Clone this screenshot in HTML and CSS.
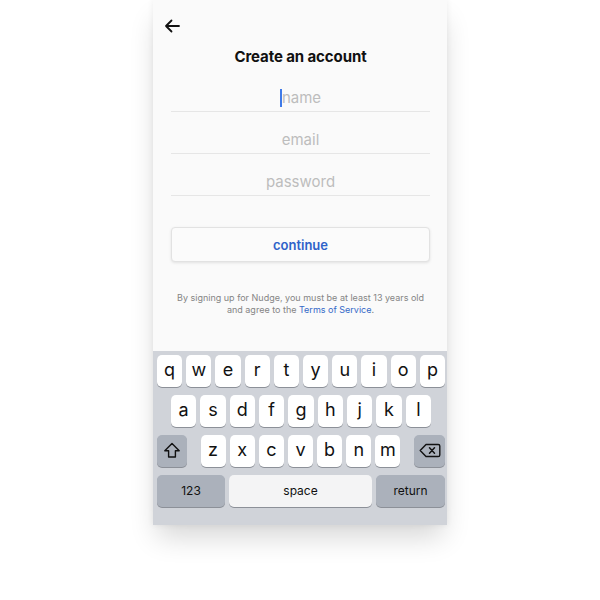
FILE: index.html
```html
<!DOCTYPE html>
<html>
<head>
<meta charset="utf-8">
<link rel="stylesheet" href="styles.css">
</head>
<body>
<div class="stage">
  <div class="phone">
    <div class="content">
      <div class="topbar">
        <svg class="back" width="16" height="14" viewBox="0 0 16 14"><path d="M15 7H2M7.5 1.5L2 7l5.5 5.5" fill="none" stroke="#111" stroke-width="1.8" stroke-linecap="round" stroke-linejoin="round"/></svg>
      </div>
      <h1 class="title">Create an account</h1>
      <div class="field first"><span class="caret"></span>name</div>
      <div class="field">email</div>
      <div class="field">password</div>
      <div class="btn">continue</div>
      <p class="terms">By signing up for Nudge, you must be at least 13 years old<br>and agree to the <span class="link">Terms of Service</span>.</p>
    </div>
    <div class="keyboard">
      <div class="row r1">
        <div class="key">q</div><div class="key">w</div><div class="key">e</div><div class="key">r</div><div class="key">t</div><div class="key">y</div><div class="key">u</div><div class="key">i</div><div class="key">o</div><div class="key">p</div>
      </div>
      <div class="row r2">
        <div class="key">a</div><div class="key">s</div><div class="key">d</div><div class="key">f</div><div class="key">g</div><div class="key">h</div><div class="key">j</div><div class="key">k</div><div class="key">l</div>
      </div>
      <div class="row r3">
        <div class="key fn"><svg width="18" height="17" viewBox="0 0 18 17"><path d="M9 1.5L1.8 8.8H5.6V15H12.4V8.8H16.2Z" fill="none" stroke="#111" stroke-width="1.4" stroke-linejoin="round"/></svg></div>
        <div class="letters">
          <div class="key">z</div><div class="key">x</div><div class="key">c</div><div class="key">v</div><div class="key">b</div><div class="key">n</div><div class="key">m</div>
        </div>
        <div class="key fn"><svg width="22" height="15" viewBox="0 0 22 15"><path d="M7 1.5H19.2a1.6 1.6 0 0 1 1.6 1.6V11.9a1.6 1.6 0 0 1-1.6 1.6H7L1.2 7.5Z" fill="none" stroke="#111" stroke-width="1.4" stroke-linejoin="round"/><path d="M10.5 4.8l5 5.4M15.5 4.8l-5 5.4" stroke="#111" stroke-width="1.5" stroke-linecap="round"/></svg></div>
      </div>
      <div class="row r4">
        <div class="key fn small">123</div>
        <div class="key space small">space</div>
        <div class="key fn small">return</div>
      </div>
    </div>
  </div>
</div>
</body>
</html>
```
FILE: styles.css
```css
html, body {
  margin: 0;
  padding: 0;
  background: #ffffff;
}
body {
  font-family: Inter, "Liberation Sans", Arial, sans-serif;
}
.stage {
  width: 600px;
  height: 600px;
  display: flex;
  justify-content: center;
  align-items: flex-start;
}
.phone {
  width: 294px;
  height: 525px;
  background: #fafafa;
  display: flex;
  flex-direction: column;
  box-shadow: 0 16px 26px -4px rgba(0,0,0,0.16), 0 0 6px rgba(0,0,0,0.07);
}
.content {
  flex: 1;
  display: flex;
  flex-direction: column;
  align-items: center;
  padding: 0 17px 0 18px;
}
.topbar {
  align-self: stretch;
  height: 20px;
  padding-top: 19px;
  margin-left: -7px;
}
.back {
  display: block;
}
.title {
  margin: 8px 0 0;
  font-size: 15px;
  font-weight: 700;
  line-height: 20px;
  color: #111;
  letter-spacing: -0.1px;
}
.field {
  align-self: stretch;
  box-sizing: border-box;
  height: 42px;
  padding-top: 18px;
  line-height: 20px;
  text-align: center;
  font-size: 15px;
  color: #bdbdbd;
  border-bottom: 1px solid #e6e6e6;
}
.field.first {
  margin-top: 3px;
}
.caret {
  display: inline-block;
  width: 2px;
  height: 18px;
  background: #3f7ae8;
  vertical-align: -4px;
}
.btn {
  align-self: stretch;
  box-sizing: border-box;
  height: 35px;
  margin-top: 31px;
  border: 1px solid #e2e2e2;
  border-radius: 4px;
  background: #fbfbfb;
  box-shadow: 0 1px 3px rgba(0,0,0,0.10);
  display: flex;
  align-items: center;
  justify-content: center;
  font-size: 13px;
  font-weight: 600;
  color: #2e62c9;
}
.terms {
  margin: 30px 0 0;
  font-size: 9px;
  line-height: 12px;
  color: #858585;
  text-align: center;
}
.link {
  color: #3569c8;
}
.keyboard {
  height: 174px;
  box-sizing: border-box;
  background: #d0d3d9;
  padding: 4px 2px 18px 4px;
  display: flex;
  flex-direction: column;
  gap: 8px;
}
.row {
  height: 32px;
  display: grid;
}
.r1 {
  grid-template-columns: repeat(10, 1fr);
  gap: 4px;
}
.r2 {
  grid-template-columns: repeat(9, 1fr);
  gap: 4px;
  padding: 0 14px;
}
.r3 {
  grid-template-columns: 30px 200px 31px;
  justify-content: space-between;
}
.letters {
  display: grid;
  grid-template-columns: repeat(7, 1fr);
  gap: 4px;
}
.r4 {
  grid-template-columns: 68px 1fr 69px;
  gap: 4px;
}
.key {
  background: #ffffff;
  border-radius: 5px;
  box-shadow: 0 1px 0 #8c9098;
  display: flex;
  align-items: center;
  justify-content: center;
  font-size: 18px;
  color: #111;
  line-height: 1;
  padding-bottom: 2px;
  box-sizing: border-box;
}
.key.fn {
  background: #abb1bb;
}
.key.space {
  background: #f4f4f5;
}
.key.small {
  font-size: 12px;
  padding-bottom: 0;
}
```
